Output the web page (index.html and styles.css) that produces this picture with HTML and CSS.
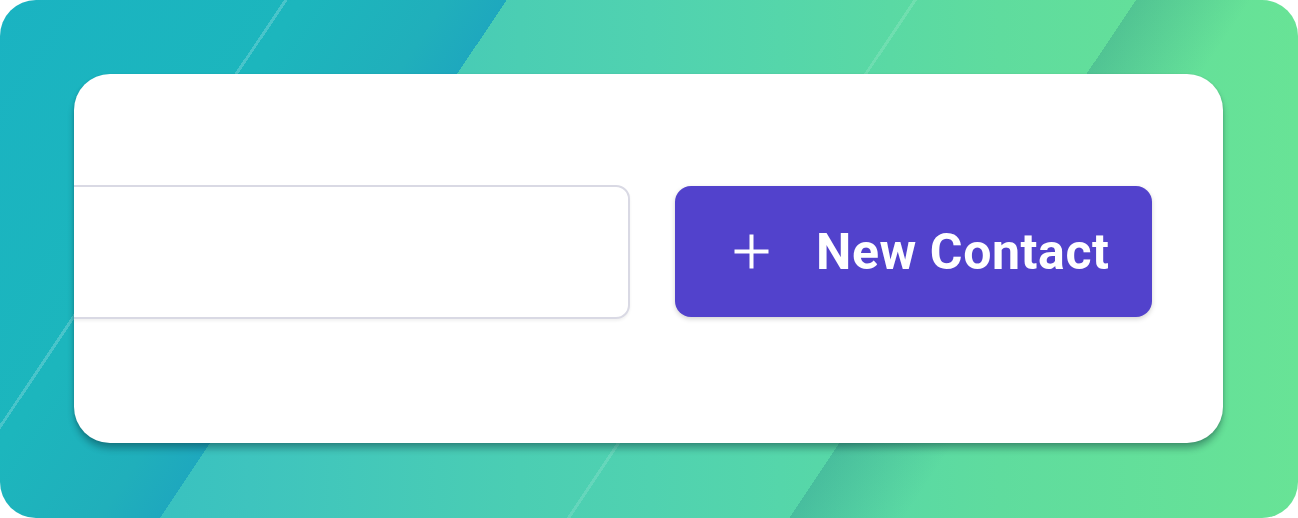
FILE: index.html
```html
<!DOCTYPE html>
<html lang="en">
<head>
<meta charset="utf-8">
<title>New Contact</title>
<link rel="stylesheet" href="styles.css">
</head>
<body>
  <div class="frame">
    <div class="card">
      <div class="search-field"></div>
      <button class="new-btn" type="button">
        <svg class="plus" width="37" height="37" viewBox="0 0 37 37" aria-hidden="true">
          <path d="M18.5 1.5V35.5M1.5 18.5H35.5" stroke="#fff" stroke-width="4" fill="none"/>
        </svg>
        <span class="label">New Contact</span>
      </button>
    </div>
  </div>
</body>
</html>
```

FILE: styles.css
```css
html, body {
  margin: 0;
  padding: 0;
  background: #ffffff;
}

.frame {
  width: 1298px;
  height: 518px;
  box-sizing: border-box;
  padding: 74px 75px 75px 74px;
  border-radius: 36px;
  overflow: hidden;
  background:
    linear-gradient(123.8deg,
      transparent 236px, rgba(255,255,255,0.2) 236px, rgba(255,255,255,0.2) 239px, transparent 239px,
      transparent 759px, rgba(255,255,255,0.13) 759px, rgba(255,255,255,0.13) 762px, transparent 762px),
    linear-gradient(123.8deg,
      transparent 944px, rgba(20,100,120,0.22) 944px, rgba(20,100,120,0) 1040px),
    linear-gradient(123.8deg,
      #1AB3C2 0px, #1CB6BD 250px, #20AFBB 370px, #1EA8BE 421px, transparent 421px),
    linear-gradient(90deg,
      #2FBDC3 0px, #3EC4BE 250px, #4BCEB3 520px, #50D2B0 650px, #55D6AA 780px, #5FDC9E 1000px, #68E396 1298px);
}

.card {
  height: 100%;
  box-sizing: border-box;
  background: #ffffff;
  border-radius: 36px;
  box-shadow: 0 6px 6px rgba(0, 30, 40, 0.3), 0 1px 3px rgba(0, 30, 40, 0.15);
  overflow: hidden;
  display: flex;
  align-items: center;
  justify-content: flex-end;
  gap: 45px;
  padding: 0 71px 14px 0;
}

.search-field {
  flex: 0 0 auto;
  width: 700px;
  height: 134px;
  box-sizing: border-box;
  border: 2px solid #D9D9E4;
  border-radius: 14px;
  background: #ffffff;
  box-shadow: 0 2px 3px rgba(0, 0, 0, 0.06);
}

.new-btn {
  flex: 0 0 auto;
  width: 477px;
  height: 131px;
  box-sizing: border-box;
  display: flex;
  align-items: center;
  gap: 46px;
  padding: 0 0 0 58px;
  margin: 0;
  border: none;
  border-radius: 16px;
  background: #5242CC;
  box-shadow: 0 2px 5px rgba(0, 0, 0, 0.18);
  color: #ffffff;
  font-family: Roboto, "Liberation Sans", Arial, sans-serif;
  font-weight: 700;
  font-size: 50px;
  letter-spacing: 0.6px;
  cursor: pointer;
}

.plus {
  display: block;
  flex: 0 0 auto;
}

.label {
  display: block;
  line-height: 1;
  white-space: nowrap;
}
```
